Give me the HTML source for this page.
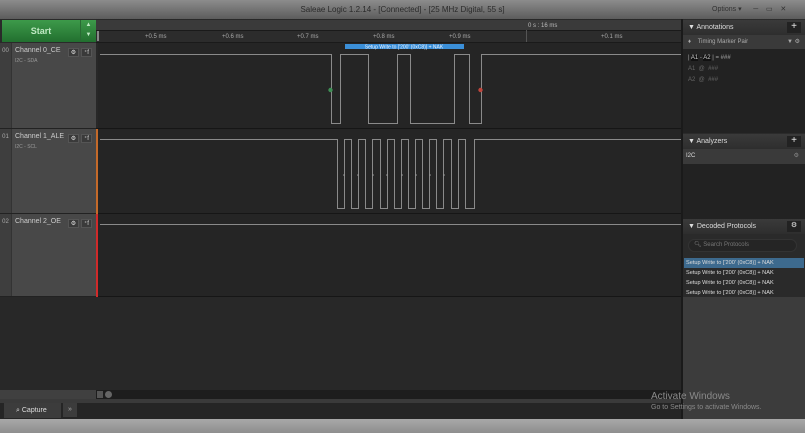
<!DOCTYPE html>
<html><head><meta charset="utf-8"><style>
*{margin:0;padding:0;box-sizing:border-box}
body{width:805px;height:433px;overflow:hidden;background:#2a2a2a;font-family:"Liberation Sans",sans-serif;font-size:7px;color:#ccc;position:relative}
.a{position:absolute;white-space:nowrap}
.title{left:0;top:0;width:805px;height:19px;background:linear-gradient(#8c8c8c,#5c5c5c);color:#2a2a2a;font-size:8px;text-align:center;line-height:19px}
.lp{left:0;width:96px;background:#484848;border-bottom:1px solid #222}
.num{left:0;width:12px;top:0;bottom:0;background:#3e3e3e;border-right:1px solid #333;color:#aaa;font-size:6px;text-align:center;padding-top:5px}
.btn{width:11px;height:9px;background:#3a3a3a;border:1px solid #555;color:#ddd;font-size:6px;text-align:center;line-height:8px}
.hdr{left:683px;width:122px;height:15px;background:linear-gradient(#3a3a3a,#2e2e2e);color:#ddd;font-size:7px;line-height:15px;padding-left:5px}
.plus{right:4px;top:2px;width:14px;height:11px;background:#222;color:#eee;font-size:10px;line-height:10px;text-align:center}
.row{left:684px;width:120px;height:10px;font-size:5.6px;line-height:10px;padding-left:2px;color:#ddd;overflow:hidden}
</style></head><body>
<div class="a title">Saleae Logic 1.2.14 - [Connected] - [25 MHz Digital, 55 s]</div>
<div class="a" style="left:712px;top:0;height:19px;line-height:19px;color:#333;font-size:7px">Options ▾ &nbsp;&nbsp;&nbsp;&nbsp; ─ &nbsp;&nbsp; ▭ &nbsp;&nbsp; ✕</div>

<div class="a" style="left:2px;top:20px;width:78px;height:22px;background:linear-gradient(#3d9a4a,#226f2f);color:#bfe9c3;font-size:9px;text-align:center;line-height:22px;font-weight:bold">Start</div>
<div class="a" style="left:80px;top:20px;width:16px;height:22px;background:linear-gradient(#3d9a4a,#226f2f);color:#bfe9c3;font-size:6px;text-align:center;line-height:10px;border-left:1px solid #2a6a34">▲<br>▼</div>

<div class="a lp" style="top:43px;height:86px"><div class="a num">00</div><div class="a" style="left:15px;top:4px;color:#ccc">Channel 0_CE</div><div class="a" style="left:15px;top:15px;font-size:5px;color:#999">I2C - SDA</div><div class="a btn" style="left:68px;top:5px">⚙</div><div class="a btn" style="left:81px;top:5px">⁺f</div></div>
<div class="a lp" style="top:129px;height:85px"><div class="a num">01</div><div class="a" style="left:15px;top:4px;color:#ccc">Channel 1_ALE</div><div class="a" style="left:15px;top:15px;font-size:5px;color:#999">I2C - SCL</div><div class="a btn" style="left:68px;top:5px">⚙</div><div class="a btn" style="left:81px;top:5px">⁺f</div></div>
<div class="a lp" style="top:214px;height:83px"><div class="a num">02</div><div class="a" style="left:15px;top:4px;color:#ccc">Channel 2_OE</div><div class="a btn" style="left:68px;top:5px">⚙</div><div class="a btn" style="left:81px;top:5px">⁺f</div></div>

<svg class="a" style="left:96px;top:19px" width="587" height="380" viewBox="96 19 587 380">
<rect x="96" y="19" width="587" height="380" fill="#282828"/>
<rect x="96" y="20" width="585" height="10" fill="#3a3a3a"/>
<rect x="96" y="30" width="585" height="12" fill="#2c2c2c"/>
<line x1="96" y1="30.5" x2="681" y2="30.5" stroke="#1a1a1a"/>
<line x1="96" y1="42.5" x2="681" y2="42.5" stroke="#1a1a1a"/>
<text x="528" y="27" fill="#bbb" font-size="6" font-family="Liberation Sans">0 s : 16 ms</text>
<line x1="526.5" y1="30" x2="526.5" y2="42" stroke="#555"/>
<g fill="#aaa" font-size="6" font-family="Liberation Sans">
<text x="145" y="38">+0.5 ms</text><text x="222" y="38">+0.6 ms</text><text x="297" y="38">+0.7 ms</text><text x="373" y="38">+0.8 ms</text><text x="449" y="38">+0.9 ms</text><text x="601" y="38">+0.1 ms</text></g>
<rect x="97" y="31" width="2" height="10" fill="#888"/>
<rect x="98" y="43" width="583" height="85" fill="#252525"/>
<rect x="98" y="129" width="583" height="84" fill="#252525"/>
<rect x="98" y="214" width="583" height="82" fill="#252525"/>
<line x1="96" y1="128.5" x2="681" y2="128.5" stroke="#161616"/>
<line x1="96" y1="213.5" x2="681" y2="213.5" stroke="#161616"/>
<line x1="96" y1="296.5" x2="681" y2="296.5" stroke="#161616"/>
<rect x="345" y="44" width="119" height="5" fill="#3b8fd8"/>
<text x="404" y="48.3" fill="#e8f2ff" font-size="5" text-anchor="middle" font-family="Liberation Sans">Setup Write to ['200' (0xC8)] + NAK</text>
<g fill="none" stroke="#8a8a8a" stroke-width="1">
<path d="M100 54.5H331.5V123.5H340.5V54.5H368.5V123.5H397.5V54.5H410.5V123.5H454.5V54.5H469.5V123.5H481.5V54.5H681"/>
<path d="M100 139.5H337.5V208.5H344.5V139.5H351.5V208.5H358.5V139.5H365.5V208.5H372.5V139.5H380.5V208.5H387.5V139.5H394.5V208.5H401.5V139.5H408.5V208.5H415.5V139.5H422.5V208.5H429.5V139.5H436.5V208.5H443.5V139.5H451.5V208.5H458.5V139.5H465.5V208.5H474.5V139.5H681"/>
<path d="M100 224.5H681"/>
</g>
<g fill="#999"><circle cx="344" cy="175" r="0.8"/><circle cx="358" cy="175" r="0.8"/><circle cx="373" cy="175" r="0.8"/><circle cx="387" cy="175" r="0.8"/><circle cx="402" cy="175" r="0.8"/><circle cx="416" cy="175" r="0.8"/><circle cx="430" cy="175" r="0.8"/><circle cx="444" cy="175" r="0.8"/></g>
<circle cx="330.5" cy="90" r="2.2" fill="#3e8f55"/>
<circle cx="480.5" cy="90" r="2.2" fill="#c0453c"/>
<rect x="96" y="129" width="2" height="85" fill="#c46a2a"/>
<rect x="96" y="214" width="2" height="83" fill="#d02a2a"/>
<rect x="96" y="297" width="585" height="93" fill="#282828"/>
</svg>
<div class="a" style="left:0;top:297px;width:96px;height:93px;background:#282828"></div>
<div class="a" style="left:0;top:390px;width:683px;height:9px;background:#1d1d1d"></div>
<div class="a" style="left:0;top:390px;width:96px;height:9px;background:#404040"></div>
<div class="a" style="left:97px;top:391px;width:6px;height:7px;background:#555"></div>
<div class="a" style="left:105px;top:391px;width:7px;height:7px;border-radius:50%;background:#666"></div>
<div class="a" style="left:0;top:399px;width:683px;height:4px;background:#3a3a3a"></div>
<div class="a" style="left:0;top:403px;width:683px;height:16px;background:#252525"></div>
<div class="a" style="left:4px;top:403px;width:57px;height:15px;background:#3c3c3c;color:#ddd;font-size:7px;line-height:15px;padding-left:12px">⌕ Capture</div>
<div class="a" style="left:63px;top:403px;width:14px;height:14px;background:#3c3c3c;color:#aaa;font-size:7px;line-height:14px;text-align:center">»</div>
<div class="a" style="left:0;top:419px;width:805px;height:14px;background:linear-gradient(#a8a8a8,#8e8e8e)"></div>

<div class="a" style="left:681px;top:19px;width:2px;height:400px;background:#1a1a1a"></div>
<div class="a" style="left:683px;top:19px;width:122px;height:400px;background:#2b2b2b"></div>
<div class="a hdr" style="top:20px">▼ Annotations<div class="a plus">+</div></div>
<div class="a" style="left:683px;top:35px;width:122px;height:14px;background:#3a3a3a;color:#aaa;font-size:6px;line-height:14px;padding-left:5px">♦ &nbsp;&nbsp;&nbsp;Timing Marker Pair<span class="a" style="right:5px;top:0">▼ ⚙</span></div>
<div class="a" style="left:683px;top:49px;width:122px;height:84px;background:#222"></div>
<div class="a" style="left:688px;top:55px;font-size:6px;color:#aaa">| <span style="background:#111;color:#ccc">A1</span> - <span style="background:#111;color:#ccc">A2</span> | = ###</div>
<div class="a" style="left:688px;top:66px;font-size:6px;color:#666">A1 &nbsp;@ &nbsp;###</div>
<div class="a" style="left:688px;top:77px;font-size:6px;color:#666">A2 &nbsp;@ &nbsp;###</div>
<div class="a hdr" style="top:134px">▼ Analyzers<div class="a plus">+</div></div>
<div class="a" style="left:683px;top:149px;width:122px;height:15px;background:#3a3a3a;color:#ddd;font-size:6px;line-height:15px;padding-left:3px">I2C<span class="a" style="right:6px;top:0;color:#888">⚙</span></div>
<div class="a" style="left:683px;top:164px;width:122px;height:55px;background:#222"></div>
<div class="a hdr" style="top:219px">▼ Decoded Protocols<div class="a plus" style="font-size:7px">⚙</div></div>
<div class="a" style="left:683px;top:234px;width:122px;height:63px;background:#2a2a2a"></div>
<div class="a" style="left:688px;top:239px;width:109px;height:13px;border-radius:7px;background:#252525;border:1px solid #333;color:#777;font-size:6px;line-height:11px;padding-left:5px">🔍︎ Search Protocols</div>
<div class="a row" style="top:258px;background:#3d6a8e">Setup Write to ['200' (0xC8)] + NAK</div>
<div class="a row" style="top:268px">Setup Write to ['200' (0xC8)] + NAK</div>
<div class="a row" style="top:278px">Setup Write to ['200' (0xC8)] + NAK</div>
<div class="a row" style="top:288px">Setup Write to ['200' (0xC8)] + NAK</div>
<div class="a" style="left:683px;top:297px;width:122px;height:122px;background:#3c3c3c"></div>
<div class="a" style="left:651px;top:391px;color:#8a8a8a;font-size:10px">Activate Windows</div>
<div class="a" style="left:651px;top:404px;color:#8a8a8a;font-size:7px">Go to Settings to activate Windows.</div>
</body></html>
